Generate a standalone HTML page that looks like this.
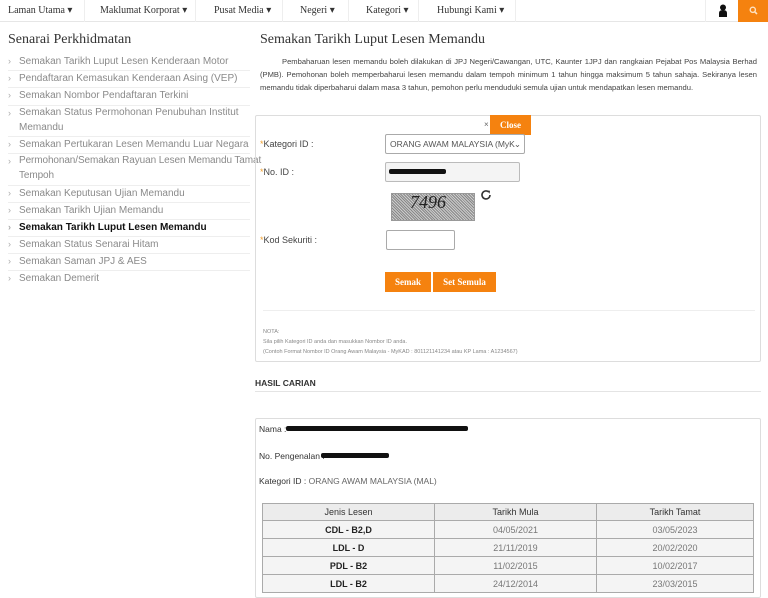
<!DOCTYPE html>
<html><head><meta charset="utf-8"><style>
*{margin:0;padding:0;box-sizing:border-box}
body{width:768px;height:597px;overflow:hidden;background:#fff;font-family:"Liberation Sans",sans-serif;position:relative;color:#333}
.a{position:absolute;white-space:nowrap}
.nav{position:absolute;left:0;top:0;width:768px;height:22px;border-bottom:1px solid #e6e6e6;background:#fff}
.nav span{position:absolute;top:5px;font-family:"Liberation Serif",serif;font-size:10px;color:#333}
.sep{position:absolute;top:0;width:1px;height:22px;background:#eee}
.side{position:absolute;left:8px;width:242px}
.si{position:absolute;left:0;width:242px;font-size:10px;color:#8a8a8a;padding-left:11px;border-bottom:1px solid #eee;line-height:15px;white-space:nowrap}
.si:before{content:"›";position:absolute;left:0;color:#aaa;font-size:9px}
.lbl{font-size:9px;color:#444}
.lbl b{color:#f0a030;font-weight:normal}
.btn{position:absolute;background:#f5820f;color:#fff;font-family:"Liberation Serif",serif;font-size:9px;font-weight:bold;text-align:center}
table{position:absolute;left:262px;top:503px;width:492px;border-collapse:collapse;font-size:9px}
td{border:1px solid #aaa;height:18px;text-align:center;color:#777;background:#f4f4f4}
tr:first-child td{color:#333;background:#ececec;height:17px}
td.l{color:#222;font-weight:bold}
.blk{position:absolute;background:#111;height:5px;border-radius:2px}
</style></head><body>
<div class="nav">
<span style="left:8px">Laman Utama ▾</span>
<div class="sep" style="left:84px"></div>
<span style="left:100px">Maklumat Korporat ▾</span>
<div class="sep" style="left:195px"></div>
<span style="left:214px">Pusat Media ▾</span>
<div class="sep" style="left:282px"></div>
<span style="left:300px">Negeri ▾</span>
<div class="sep" style="left:348px"></div>
<span style="left:366px">Kategori ▾</span>
<div class="sep" style="left:418px"></div>
<span style="left:437px">Hubungi Kami ▾</span>
<div class="sep" style="left:515px"></div>
<div class="sep" style="left:705px"></div>
<svg class="a" style="left:718px;top:4px" width="10" height="13" viewBox="0 0 10 13"><circle cx="5" cy="3.5" r="3" fill="#111"/><path d="M1 13V9q0-3 4-3t4 3v4z" fill="#111"/></svg>
<div class="a" style="left:738px;top:0;width:30px;height:22px;background:#f5820f"></div>
<svg class="a" style="left:749px;top:6px" width="9" height="9" viewBox="0 0 9 9"><circle cx="3.8" cy="3.8" r="2.6" stroke="#fde2c2" stroke-width="1.4" fill="none"/><path d="M5.8 5.8L8 8" stroke="#fde2c2" stroke-width="1.6"/></svg>
</div>

<div class="a" style="left:8px;top:32px;font-family:'Liberation Serif',serif;font-size:14px;color:#333">Senarai Perkhidmatan</div>
<div class="side">
<div class="si" style="top:54px;height:17px">Semakan Tarikh Luput Lesen Kenderaan Motor</div>
<div class="si" style="top:71px;height:17px">Pendaftaran Kemasukan Kenderaan Asing (VEP)</div>
<div class="si" style="top:88px;height:18px">Semakan Nombor Pendaftaran Terkini</div>
<div class="si" style="top:106px;line-height:14.5px;height:31px">Semakan Status Permohonan Penubuhan Institut<br>Memandu</div>
<div class="si" style="top:137px;height:17px">Semakan Pertukaran Lesen Memandu Luar Negara</div>
<div class="si" style="top:154px;line-height:14.5px;height:32px;letter-spacing:-0.1px">Permohonan/Semakan Rayuan Lesen Memandu Tamat<br>Tempoh</div>
<div class="si" style="top:186px;height:17px">Semakan Keputusan Ujian Memandu</div>
<div class="si" style="top:203px;height:17px">Semakan Tarikh Ujian Memandu</div>
<div class="si" style="top:220px;height:17px;color:#111;font-weight:bold">Semakan Tarikh Luput Lesen Memandu</div>
<div class="si" style="top:237px;height:17px">Semakan Status Senarai Hitam</div>
<div class="si" style="top:254px;height:17px">Semakan Saman JPJ &amp; AES</div>
<div class="si" style="top:271px;height:17px;border:none">Semakan Demerit</div>
</div>

<div class="a" style="left:260px;top:32px;font-family:'Liberation Serif',serif;font-size:14px;color:#333">Semakan Tarikh Luput Lesen Memandu</div>
<div class="a" style="left:260px;top:55px;width:497px;white-space:normal;font-size:7.6px;line-height:13px;color:#444;text-align:justify;text-indent:22px">Pembaharuan lesen memandu boleh dilakukan di JPJ Negeri/Cawangan, UTC, Kaunter 1JPJ dan rangkaian Pejabat Pos Malaysia Berhad (PMB). Pemohonan boleh memperbaharui lesen memandu dalam tempoh minimum 1 tahun hingga maksimum 5 tahun sahaja. Sekiranya lesen memandu tidak diperbaharui dalam masa 3 tahun, pemohon perlu menduduki semula ujian untuk mendapatkan lesen memandu.</div>

<div class="a" style="left:255px;top:115px;width:506px;height:247px;border:1px solid #ddd;border-radius:2px"></div>
<div class="a" style="left:484px;top:120px;font-size:8px;color:#666">×</div>
<div class="btn" style="left:490px;top:115px;width:41px;height:20px;line-height:20px">Close</div>
<div class="a lbl" style="left:260px;top:139px"><b>*</b>Kategori ID :</div>
<div class="a" style="left:385px;top:134px;width:140px;height:20px;border:1px solid #aaa;border-radius:2px;font-size:8.5px;color:#555;padding:4px 0 0 4px;overflow:hidden">ORANG AWAM MALAYSIA (MyK <span style="position:absolute;right:3px;top:4px">⌄</span></div>
<div class="a lbl" style="left:260px;top:167px"><b>*</b>No. ID :</div>
<div class="a" style="left:385px;top:162px;width:135px;height:20px;border:1px solid #bbb;border-radius:2px;background:#f4f4f4"></div>
<div class="blk" style="left:389px;top:169px;width:57px"></div>
<div class="a" style="left:391px;top:193px;width:84px;height:28px;background:repeating-linear-gradient(45deg,#888 0 1px,#ccc 1px 2px);border:1px solid #999"></div>
<div class="a" style="left:410px;top:192px;font-size:18px;font-style:italic;color:#222;font-family:'Liberation Serif',serif">7496</div>
<svg class="a" style="left:480px;top:189px" width="12" height="12" viewBox="0 0 12 12"><path d="M10 6A4 4 0 1 1 8.5 2.8" stroke="#333" stroke-width="1.6" fill="none"/><path d="M7 1.5l3 .2-.5 3z" fill="#333"/></svg>
<div class="a lbl" style="left:260px;top:235px"><b>*</b>Kod Sekuriti :</div>
<div class="a" style="left:386px;top:230px;width:69px;height:20px;border:1px solid #aaa;border-radius:2px"></div>
<div class="btn" style="left:385px;top:272px;width:46px;height:20px;line-height:20px">Semak</div>
<div class="btn" style="left:433px;top:272px;width:63px;height:20px;line-height:20px">Set Semula</div>
<div class="a" style="left:263px;top:310px;width:492px;height:1px;background:#eee"></div>
<div class="a" style="left:263px;top:327px;font-size:5.5px;color:#888;line-height:10px">NOTA:<br>Sila pilih Kategori ID anda dan masukkan Nombor ID anda.<br>(Contoh Format Nombor ID Orang Awam Malaysia - MyKAD : 801121141234 atau KP Lama : A1234567)</div>

<div class="a" style="left:255px;top:378px;font-size:8.5px;font-weight:bold;color:#333">HASIL CARIAN</div>
<div class="a" style="left:255px;top:391px;width:506px;height:1px;background:#e4e4e4"></div>

<div class="a" style="left:255px;top:418px;width:506px;height:180px;border:1px solid #ddd;border-radius:2px"></div>
<div class="a" style="left:259px;top:424px;font-size:8.5px;color:#333">Nama :</div>
<div class="blk" style="left:286px;top:426px;width:182px"></div>
<div class="a" style="left:259px;top:451px;font-size:8.5px;color:#333">No. Pengenalan :</div>
<div class="blk" style="left:321px;top:453px;width:68px"></div>
<div class="a" style="left:259px;top:476px;font-size:8.5px;color:#666"><span style="color:#333">Kategori ID :</span> ORANG AWAM MALAYSIA (MAL)</div>
<table>
<tr><td style="width:172px">Jenis Lesen</td><td style="width:162px">Tarikh Mula</td><td>Tarikh Tamat</td></tr>
<tr><td class="l">CDL - B2,D</td><td>04/05/2021</td><td>03/05/2023</td></tr>
<tr><td class="l">LDL - D</td><td>21/11/2019</td><td>20/02/2020</td></tr>
<tr><td class="l">PDL - B2</td><td>11/02/2015</td><td>10/02/2017</td></tr>
<tr><td class="l">LDL - B2</td><td>24/12/2014</td><td>23/03/2015</td></tr>
</table>
</body></html>
